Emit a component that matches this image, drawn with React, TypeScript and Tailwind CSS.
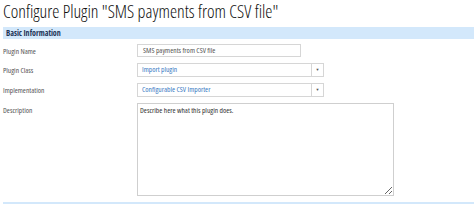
const labelCls = 'w-[134px] shrink-0 pt-[2px] text-[7.5px] leading-[10px] text-[#555]'

function Row({ label, children }: { label: string; children: React.ReactNode }) {
  return (
    <div className="flex items-start">
      <div className={labelCls}>{label}</div>
      {children}
    </div>
  )
}

function Select({ value }: { value: string }) {
  return (
    <div className="flex h-[14px] w-[187px] border border-[#d6d6d6] bg-white">
      <div className="flex flex-1 items-center pl-[4px] text-[7.5px] text-[#3b7bc4]">{value}</div>
      <div className="flex w-[12px] items-center justify-center border-l border-[#d6d6d6] text-[4px] text-[#555]">
        ▼
      </div>
    </div>
  )
}

export default function App() {
  return (
    <div className="h-[204px] overflow-hidden bg-white pl-[3px] font-['Open_Sans',sans-serif] font-stretch-[80%] text-[#222]">
      <h1 className="-mt-[1px] whitespace-nowrap text-[18px] leading-[24px] font-light text-[#111]">
        Configure Plugin "SMS payments from CSV file"
      </h1>

      <div className="mt-[4px] flex h-[12px] items-center bg-[#d3e8fb] pl-[3px] text-[8px] font-bold text-[#1d3557]">
        Basic Information
      </div>

      <div className="mt-[5px] flex flex-col gap-[6px]">
        <Row label="Plugin Name">
          <div className="flex h-[13px] w-[164px] items-center border border-[#d6d6d6] bg-white pl-[5px] text-[7.5px] text-[#555]">
            SMS payments from CSV file
          </div>
        </Row>
        <Row label="Plugin Class">
          <Select value="Import plugin" />
        </Row>
        <Row label="Implementation">
          <Select value="Configurable CSV Importer" />
        </Row>
        <Row label="Description">
          <textarea
            readOnly
            defaultValue="Describe here what this plugin does."
            className="h-[93px] w-[257px] border border-[#cfcfcf] bg-white px-[2px] py-[1px] font-['Open_Sans',sans-serif] font-stretch-[80%] text-[7.5px] leading-[10px] text-[#333] outline-none"
          />
        </Row>
      </div>

      <div className="mt-[6px] h-[6px] bg-[#d3e8fb]" />
    </div>
  )
}
